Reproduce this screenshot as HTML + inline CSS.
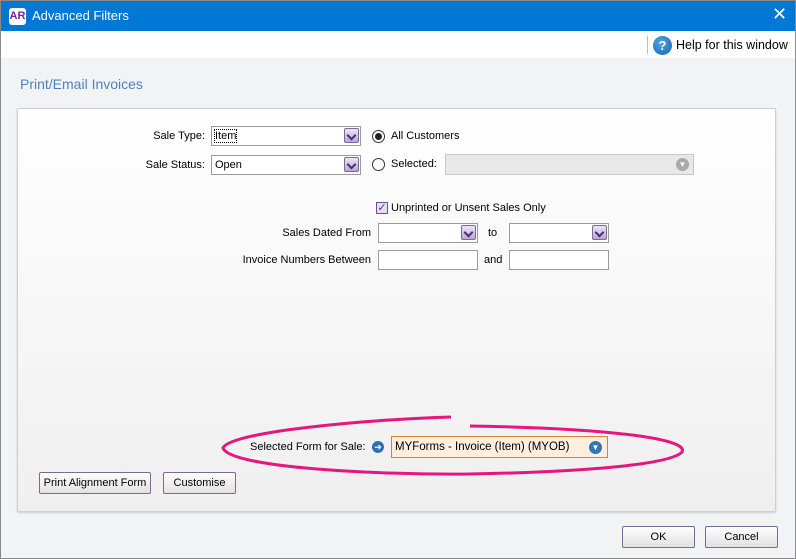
<!DOCTYPE html>
<html><head><style>
*{margin:0;padding:0;box-sizing:border-box}
body{width:796px;height:559px;position:relative;font-family:"Liberation Sans",sans-serif;font-size:11px;color:#000;background:#f2f3f5;overflow:hidden}
.a{position:absolute;white-space:nowrap}
.win{left:0;top:0;width:796px;height:559px;border:1px solid #8a8a8a}
.title{left:1px;top:1px;width:794px;height:30px;background:#0078d4;color:#fff;font-size:13px}
.tool{left:1px;top:31px;width:794px;height:27px;background:#fff}
.panel{left:17px;top:108px;width:759px;height:404px;border:1px solid #cfcfcf;border-radius:2px;background:linear-gradient(#fff,#efefef);box-shadow:0 1px 2px #ccc}
.lbl{text-align:right}
.box{background:#fff;border:1px solid #9a9a9a;height:20px;padding:2px 3px;line-height:14px}
.dd{width:15px;height:15px;border:1px solid #7d6a99;border-radius:2px;background:linear-gradient(#eee5f7,#b9a6d2)}
.dd:after{content:"";position:absolute;left:3px;top:3px;width:5px;height:5px;border-right:2px solid #4b2b7a;border-bottom:2px solid #4b2b7a;transform:rotate(45deg)}
.btn{border:1px solid #7a6b94;border-radius:2px;background:linear-gradient(#fdfdfd,#e2e2e2);text-align:center;line-height:20px;height:22px}
.radio{width:13px;height:13px;border:1px solid #333;border-radius:50%;background:#fff}
</style></head><body>
<div class="a win"></div>
<div class="a title">
 <div class="a" style="left:8px;top:7px;width:17px;height:17px;background:#fff;border-radius:3px;font-weight:bold;font-size:11px;color:#7a1fa0;line-height:17px;text-align:center">AR</div>
 <div class="a" style="left:31px;top:7px">Advanced Filters</div>
 <div class="a" style="left:771px;top:3px;font-size:18px">✕</div>
</div>
<div class="a tool">
 <div class="a" style="left:646px;top:5px;width:1px;height:18px;background:#bbb"></div>
 <div class="a" style="left:652px;top:5px;width:19px;height:19px;border-radius:50%;background:radial-gradient(circle at 40% 35%,#4fa3e0,#1566b0);color:#fff;font-weight:bold;text-align:center;line-height:19px;font-size:13px">?</div>
 <div class="a" style="left:675px;top:7px;font-size:12.5px">Help for this window</div>
</div>
<div class="a" style="left:20px;top:76px;color:#4a84c0;font-size:14px">Print/Email Invoices</div>
<div class="a panel"></div>

<div class="a lbl" style="left:120px;top:130px;width:85px">Sale Type:</div>
<div class="a box" style="left:211px;top:126px;width:150px"><span style="outline:1px dotted #000">Item</span></div>
<div class="a dd" style="left:344px;top:128px"></div>
<div class="a radio" style="left:372px;top:130px"></div><div class="a" style="left:375px;top:133px;width:7px;height:7px;border-radius:50%;background:#222"></div>
<div class="a" style="left:391px;top:130px">All Customers</div>

<div class="a lbl" style="left:120px;top:159px;width:85px">Sale Status:</div>
<div class="a box" style="left:211px;top:155px;width:150px">Open</div>
<div class="a dd" style="left:344px;top:157px"></div>
<div class="a radio" style="left:372px;top:158px"></div>
<div class="a" style="left:391px;top:158px">Selected:</div>
<div class="a" style="left:445px;top:154px;width:249px;height:21px;background:#e8e8e8;border:1px solid #c8c8c8"></div>
<div class="a" style="left:676px;top:158px;width:13px;height:13px;border-radius:50%;background:#aaa;color:#fff;font-size:8px;text-align:center;line-height:13px">▼</div>

<div class="a" style="left:376px;top:202px;width:12px;height:12px;border:1px solid #6b4f90;background:#e7dcf3;font-size:11px;line-height:10px;color:#5b2b8a;text-align:center">✓</div>
<div class="a" style="left:391px;top:202px">Unprinted or Unsent Sales Only</div>

<div class="a lbl" style="left:230px;top:227px;width:141px">Sales Dated From</div>
<div class="a box" style="left:378px;top:223px;width:100px"></div>
<div class="a dd" style="left:461px;top:225px"></div>
<div class="a" style="left:488px;top:227px">to</div>
<div class="a box" style="left:509px;top:223px;width:100px"></div>
<div class="a dd" style="left:592px;top:225px"></div>

<div class="a lbl" style="left:200px;top:254px;width:171px">Invoice Numbers Between</div>
<div class="a box" style="left:378px;top:250px;width:100px"></div>
<div class="a" style="left:484px;top:254px">and</div>
<div class="a box" style="left:509px;top:250px;width:100px"></div>

<div class="a" style="left:250px;top:441px">Selected Form for Sale:</div>
<div class="a" style="left:372px;top:441px;width:12px;height:12px;border-radius:50%;background:#2e6fb0;color:#fff;font-size:9px;line-height:12px;text-align:center">➔</div>
<div class="a" style="left:391px;top:436px;width:217px;height:22px;background:#fdeede;border:1px solid #d9822b;padding:4px 3px;font-size:11.5px">MYForms - Invoice (Item) (MYOB)</div>
<div class="a" style="left:589px;top:441px;width:13px;height:13px;border-radius:50%;background:#2e78b8;color:#fff;font-size:8px;text-align:center;line-height:13px">▼</div>

<svg class="a" style="left:0;top:0" width="796" height="559"><path d="M451 417 C360 420 230 432 223 448 C230 468 380 475 470 474 C580 472 670 465 682 452 C690 438 600 428 470 426" fill="none" stroke="#e5167e" stroke-width="3"/></svg>

<div class="a btn" style="left:39px;top:472px;width:112px">Print Alignment Form</div>
<div class="a btn" style="left:163px;top:472px;width:73px">Customise</div>
<div class="a btn" style="left:622px;top:526px;width:73px">OK</div>
<div class="a btn" style="left:705px;top:526px;width:73px">Cancel</div>
</body></html>
